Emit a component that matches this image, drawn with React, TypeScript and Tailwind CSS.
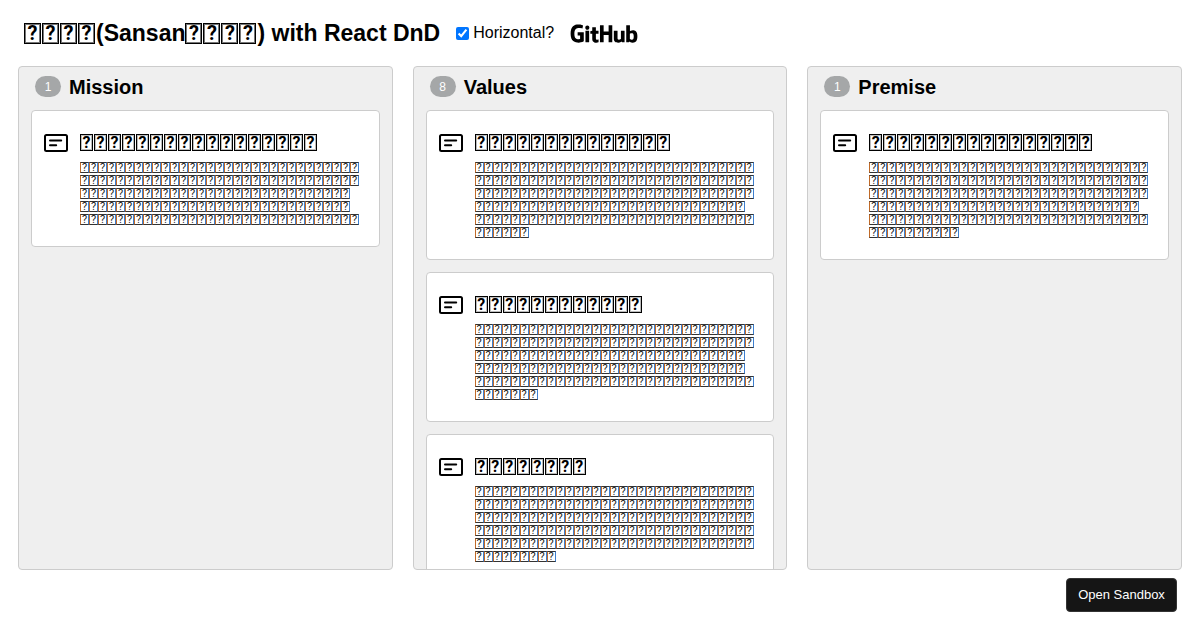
import { useState } from "react";
import { DiGithubFull } from "react-icons/di";

interface CardItem {
  title: number;
  lines: number[];
}

interface ColumnData {
  name: string;
  count: number;
  cards: CardItem[];
}

const columns: ColumnData[] = [
  {
    name: "Mission",
    count: 1,
    cards: [{ title: 17, lines: [31, 31, 30, 30, 31] }],
  },
  {
    name: "Values",
    count: 8,
    cards: [
      { title: 14, lines: [31, 31, 31, 30, 31, 6] },
      { title: 12, lines: [31, 31, 30, 30, 31, 7] },
      { title: 8, lines: [31, 31, 31, 31, 31, 9] },
    ],
  },
  {
    name: "Premise",
    count: 1,
    cards: [{ title: 16, lines: [31, 31, 31, 30, 31, 10] }],
  },
];

// Missing-glyph boxes, one question mark in a frame per character
const boxStyles = {
  heading:
    "mr-px h-[21px] w-[17px] border border-black text-[20px] leading-[19px] font-bold shadow-[inset_0_0_0_1px_#777]",
  title:
    "mr-px h-[17px] w-[13px] border border-black text-[16px] leading-[15px] font-bold shadow-[inset_0_0_0_1px_#bbb]",
  body: "h-[11px] w-[9px] border border-y-[#333] border-l-[#c06a28] border-r-[#3d7fd0] text-[11px] leading-[9px]",
};

function Boxes({ count, size }: { count: number; size: keyof typeof boxStyles }) {
  return (
    <span className="inline-flex font-['Roboto',sans-serif]">
      {Array.from({ length: count }, (_, i) => (
        <span key={i} className={`flex shrink-0 justify-center ${boxStyles[size]}`}>
          ?
        </span>
      ))}
    </span>
  );
}

function NoteIcon() {
  return (
    <svg
      className="h-6 w-6 shrink-0"
      viewBox="0 0 24 24"
      fill="none"
      stroke="currentColor"
      aria-hidden="true"
    >
      <rect x="1" y="4" width="22" height="16" rx="1.5" strokeWidth="2" />
      <path d="M6 9.6h11.2M6 14.2h6.2" strokeWidth="2" strokeLinecap="round" />
    </svg>
  );
}

function Card({ title, lines }: CardItem) {
  return (
    <li className="flex shrink-0 gap-3 rounded border border-[#ccc] bg-white px-3 py-5">
      <NoteIcon />
      <div className="min-w-0">
        <h3 className="flex h-[22px] items-center">
          <Boxes count={title} size="title" />
        </h3>
        <p className="mt-2 text-[#222]">
          {lines.map((count, i) => (
            <span key={i} className="flex h-[13px] items-center">
              <Boxes count={count} size="body" />
            </span>
          ))}
        </p>
      </div>
    </li>
  );
}

function Column({ name, count, cards }: ColumnData) {
  return (
    <section className="flex h-[80vh] min-w-0 flex-1 flex-col overflow-hidden rounded border border-[#ccc] bg-[#efefef]">
      <header className="flex h-[43px] shrink-0 items-center gap-2 px-4 pb-1">
        <span className="flex h-[21px] w-[26px] items-center justify-center rounded-full bg-[#a5a7a8] text-xs text-white">
          {count}
        </span>
        <h2 className="text-xl leading-[22px] font-bold">{name}</h2>
      </header>
      <ul className="flex min-h-0 flex-col gap-3 px-3">
        {cards.map((card, i) => (
          <Card key={i} {...card} />
        ))}
      </ul>
    </section>
  );
}

export default function App() {
  const [horizontal, setHorizontal] = useState(true);

  return (
    <div className="min-h-screen bg-white font-['Liberation_Sans',sans-serif] text-black">
      <header className="flex h-[66px] items-center px-6">
        <h1 className="flex items-center text-[23px] leading-8 font-bold whitespace-pre">
          <Boxes count={4} size="heading" />
          (Sansan
          <Boxes count={4} size="heading" />
          {") with React DnD"}
        </h1>
        <label className="ml-4 flex items-center gap-1 text-base">
          <input
            type="checkbox"
            className="h-[13px] w-[13px]"
            checked={horizontal}
            onChange={(e) => setHorizontal(e.target.checked)}
          />
          Horizontal?
        </label>
        <a href="https://github.com" aria-label="GitHub" className="ml-4">
          <DiGithubFull className="h-[68px] w-[68px]" />
        </a>
      </header>
      <main className={horizontal ? "flex gap-5 px-[18px]" : "flex flex-col gap-5 px-[18px]"}>
        {columns.map((column) => (
          <Column key={column.name} {...column} />
        ))}
      </main>
      <div className="flex justify-end px-[23px] pt-2">
        <button
          type="button"
          className="h-[34px] w-[111px] rounded border border-[#343434] bg-[#151515] text-[13px] text-white"
        >
          Open Sandbox
        </button>
      </div>
    </div>
  );
}
